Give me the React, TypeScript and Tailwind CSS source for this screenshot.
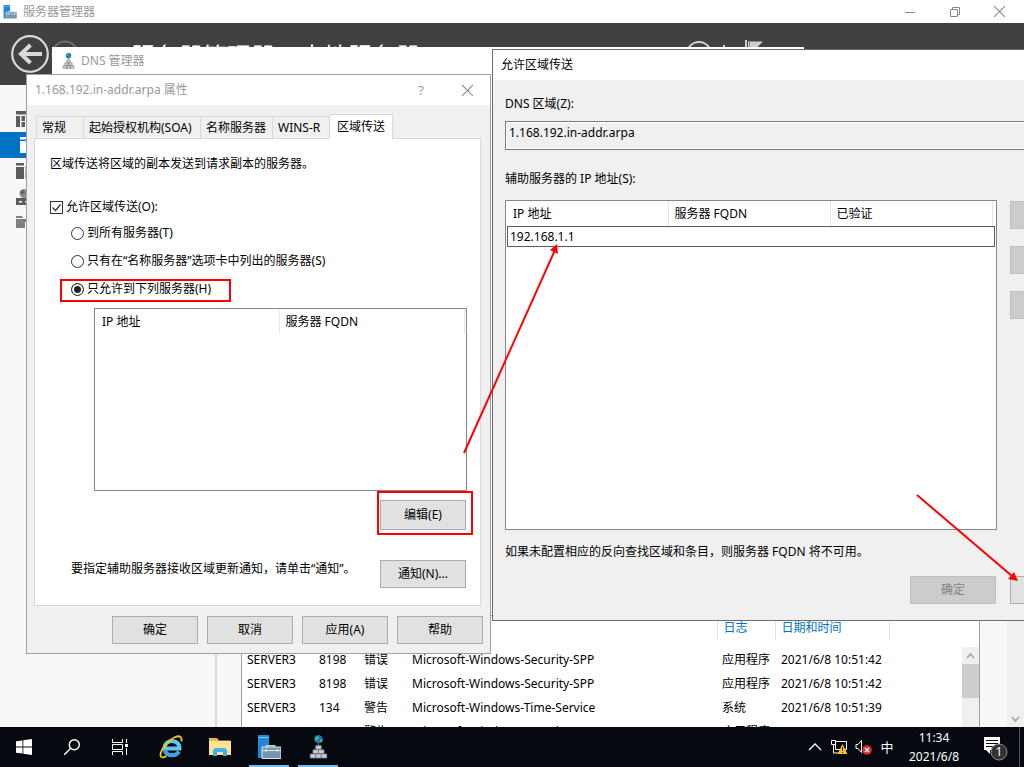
import React from 'react';

interface ServerEvent {
  server: string;
  id: string;
  level: string;
  source: string;
  log: string;
  time: string;
}

const events: ServerEvent[] = [
  { server: 'SERVER3', id: '8198', level: '错误', source: 'Microsoft-Windows-Security-SPP', log: '应用程序', time: '2021/6/8 10:51:42' },
  { server: 'SERVER3', id: '8198', level: '错误', source: 'Microsoft-Windows-Security-SPP', log: '应用程序', time: '2021/6/8 10:51:42' },
  { server: 'SERVER3', id: '134', level: '警告', source: 'Microsoft-Windows-Time-Service', log: '系统', time: '2021/6/8 10:51:39' },
  { server: '', id: '', level: '警告', source: 'Microsoft-Windows-Security-SPP', log: '应用程序', time: '' },
];

const tabs = [
  { label: '常规', width: 'w-[47px]' },
  { label: '起始授权机构(SOA)', width: 'w-[117px]' },
  { label: '名称服务器', width: 'w-[72px]' },
  { label: 'WINS-R', width: 'w-[57px]' },
];

const buttonClass = 'h-7 w-[86px] shrink-0 border border-[#adadad] bg-[#e1e1e1] text-center leading-[18px]';
const disabledClass = 'h-7 w-[86px] shrink-0 border border-[#bfbfbf] bg-[#cccccc] text-[#838383]';
const radioClass =
  'size-[13px] shrink-0 appearance-none rounded-full border border-[#333333] bg-white checked:bg-[#222222] checked:shadow-[inset_0_0_0_2px_#ffffff]';

function ServerIcon({ className }: { className: string }) {
  return (
    <svg viewBox="0 0 24 24" className={className}>
      <path d="M1 0h11v23H1z" fill="#1e88d6" />
      <path d="M1 2.5h11" stroke="#8cc8f3" />
      <path d="M9.5 12.5v-1.8h8v1.8" fill="none" stroke="#c7d6e0" strokeWidth="1.5" />
      <path d="M5 12h19v11.500H5z" fill="#7896ab" stroke="#dbe6ed" />
      <path d="M5 15.500h19M9 14v3M20 14v3" stroke="#dbe6ed" fill="none" />
    </svg>
  );
}

function DnsIcon({ className }: { className: string }) {
  return (
    <svg viewBox="0 0 20 26" className={className}>
      <circle cx="10" cy="4.500" r="4.500" fill="#1f6fc4" />
      <path d="M7 1.500c3-1 4 1 3 2.500S7 5 6 6.500M11 6l3-2 .3 2.500-2 2z" fill="#43c463" />
      <path d="M10 9v3" stroke="#888" />
      <g fill="#c9ccd4" stroke="#777b86" strokeWidth=".8">
        <path d="M7 11.500h6v4H7zM4 16h6v4H4zM10 16h6v4h-6zM1 20.500h6v4.500H1zM7 20.500h6v4.500H7zM13 20.500h6v4.500h-6z" />
      </g>
    </svg>
  );
}

function ServerManager() {
  return (
    <div className="flex min-h-0 flex-1 flex-col bg-white">
      <div className="flex h-[23px] shrink-0 items-center pr-[2px] pl-[3px] text-[#999999]">
        <ServerIcon className="mt-px size-[14px]" />
        <span className="ml-[6px] leading-[18px]">服务器管理器</span>
        <div className="ml-auto flex items-center">
          <button aria-label="最小化" className="flex h-[23px] w-[45px] items-center justify-center">
            <svg viewBox="0 0 10 10" className="size-[10px]" stroke="#888" fill="none"><path d="M0 5.500h10" /></svg>
          </button>
          <button aria-label="还原" className="flex h-[23px] w-[45px] items-center justify-center">
            <svg viewBox="0 0 10 10" className="size-[10px]" stroke="#888" fill="none"><path d="M.5 2.500h7v7h-7zM2.500 2.500v-2h7v7h-2" /></svg>
          </button>
          <button aria-label="关闭" className="flex h-[23px] w-[45px] items-center justify-center">
            <svg viewBox="0 0 10 10" className="size-[11px]" stroke="#888" fill="none"><path d="M0 0l10 10M10 0L0 10" /></svg>
          </button>
        </div>
      </div>

      <header className="flex h-[62px] shrink-0 items-center bg-[#414141] pl-[11px] text-white">
        <button aria-label="后退">
          <svg viewBox="0 0 38 38" className="size-[38px]" fill="none" stroke="#d9d9d9">
            <circle cx="19" cy="19" r="17.800" strokeWidth="2.200" />
            <path d="M31 19H10M19.500 10L10 19l9.500 9" strokeWidth="4" />
          </svg>
        </button>
        <svg viewBox="0 0 28 28" className="ml-[2px] size-[28px]" fill="none" stroke="#6e6e6e" strokeWidth="2"><circle cx="14" cy="14" r="12.500" /></svg>
        <h1 className="ml-[52px] flex-1 pt-1 text-[24px] leading-[32px] whitespace-nowrap">
          服务器管理器<span className="mx-[9px] inline-block w-[7px]">·</span>本地服务器
        </h1>
        <svg viewBox="0 0 90 28" className="mr-[32px] h-[28px] w-[90px] shrink-0" fill="none" stroke="#cfcfcf">
          <circle cx="15" cy="14" r="12" strokeWidth="2" />
          <path d="M39 5h2v2h-2z" fill="#cfcfcf" stroke="none" />
          <path d="M61 0h2v28h-2zM64 1h1v27h-1zM65.500 1.500H79l-5 5 5 6H65.500z" fill="#cfcfcf" stroke="none" />
        </svg>
        <nav className="flex gap-[12px] pt-[6px] pr-[24px] leading-[18px] text-[#bbbbbb]">
          <button>管理(M)</button>
          <button>工具(T)</button>
          <button>视图(V)</button>
          <button>帮助(H)</button>
        </nav>
      </header>

      <div className="flex min-h-0 flex-1 overflow-hidden">
        <aside className="flex w-[217px] shrink-0 flex-col border-r-2 border-[#d9d9d9] bg-[#f8f8f8] pt-[21px]">
          <div className="flex h-[26px] items-center pl-4">
            <svg viewBox="0 0 16 16" className="size-4" fill="#5c5c5c"><path d="M0 0h16v3.500H0zM0 5h4v11H0zM5.500 5H9v5H5.500zM5.500 11H9v5H5.500zM10.500 5H16v11h-5.500z" /></svg>
          </div>
          <div className="flex h-[26px] items-center bg-[#0072c6] pl-5">
            <svg viewBox="0 0 16 16" className="size-4" fill="#fff"><path d="M0 0h16v2.500H0zM0 4h16v12H0z" /></svg>
          </div>
          <div className="flex h-[26px] items-center pl-4">
            <svg viewBox="0 0 16 16" className="size-4" fill="#5c5c5c"><path d="M0 0h8v2.500H0zM0 4h8v12H0zM9.500 3H16v3H9.500zM9.500 7H16v9H9.500z" /></svg>
          </div>
          <div className="flex h-[26px] items-center pl-4">
            <svg viewBox="0 0 16 16" className="size-4" fill="#5c5c5c">
              <circle cx="8" cy="4.500" r="4.500" fill="#8a8a8a" />
              <path d="M4 3l3-2 2 3-3 1zM0 9h16v7H0z" />
              <path d="M3 12h3v1.500H3zM9 12h3v1.500H9z" fill="#fff" />
            </svg>
          </div>
          <div className="flex h-[26px] items-center pl-4">
            <svg viewBox="0 0 16 16" className="size-4" fill="#808080"><path d="M0 1h6l1 2H0zM0 4h16v3H9v6H0z" /><path d="M10 8h6v8h-6z" fill="#555" /></svg>
          </div>
        </aside>

        <main className="flex min-w-0 flex-1 bg-[#f8f8f8] pl-[24px]">
          <section className="min-w-0 flex-1 border-x border-[#a0a0a0] bg-white pt-[531px]">
            <table className="w-full table-fixed text-left whitespace-nowrap">
              <thead>
                <tr className="h-[24px] leading-[18px] text-[#0072c6]">
                  <th className="w-[475px] border-r border-[#e0e0e0]" />
                  <th className="w-[58px] border-r border-[#e0e0e0] pl-[6px] font-normal">日志</th>
                  <th className="w-[114px] border-r border-[#e0e0e0] pl-[6px] font-normal">日期和时间</th>
                  <th />
                </tr>
              </thead>
            </table>
            <div className="mt-[7px] flex">
              <table className="mt-px min-w-0 flex-1 table-fixed text-left whitespace-nowrap">
                <colgroup>
                  <col className="w-[72px]" />
                  <col className="w-[45px]" />
                  <col className="w-[48px]" />
                  <col className="w-[310px]" />
                  <col className="w-[58px]" />
                  <col />
                </colgroup>
                <tbody>
                  {events.map((event, i) => (
                    <tr key={i} className="h-[24px] leading-[18px]">
                      <td className="pl-[5px]">{event.server}</td>
                      <td className="pl-[5px]">{event.id}</td>
                      <td className="pl-[5px]">{event.level}</td>
                      <td className="pl-[5px]">{event.source}</td>
                      <td className="pl-[5px]">{event.log}</td>
                      <td className="pl-[6px]">{event.time}</td>
                    </tr>
                  ))}
                </tbody>
              </table>
              <div className="flex w-[17px] flex-col bg-[#f0f0f0]">
                <svg viewBox="0 0 17 17" className="size-[17px]" fill="none" stroke="#a3a3a3" strokeWidth="1.500"><path d="M5 11l3.500-4 3.500 4" /></svg>
                <div className="h-[34px] bg-[#cdcdcd]" />
              </div>
            </div>
          </section>
          <div className="w-[27px]" />
          <div className="flex w-[17px] flex-col justify-end bg-[#f0f0f0]">
            <svg viewBox="0 0 17 17" className="size-[17px]" fill="none" stroke="#a3a3a3" strokeWidth="1.500"><path d="M5 7l3.500 4L12 7" /></svg>
          </div>
        </main>
      </div>
    </div>
  );
}

function DnsManager() {
  return (
    <div className="absolute top-[47px] left-[52px] flex h-[569px] w-[752px] flex-col border-b border-[#a0a0a0] bg-white">
      <div className="flex h-[28px] items-center pl-[10px] text-[#999999]">
        <DnsIcon className="h-[16px] w-[13px]" />
        <span className="ml-[6px] leading-[18px]">DNS 管理器</span>
      </div>
    </div>
  );
}

function ZonePropertiesDialog() {
  return (
    <div role="dialog" aria-label="1.168.192.in-addr.arpa 属性" className="absolute top-[74px] left-[26px] flex w-[465px] flex-col border border-[#a0a0a0] bg-[#f0f0f0] pb-[9px]">
      <div className="flex h-[30px] items-center bg-white pl-2 text-[#999999]">
        <span className="leading-[18px]">1.168.192.in-addr.arpa 属性</span>
        <button aria-label="帮助" className="ml-auto w-[46px] text-[13px] leading-[18px]">?</button>
        <button aria-label="关闭" className="flex h-[30px] w-[46px] items-center justify-center">
          <svg viewBox="0 0 10 10" className="size-[11px]" stroke="#888" fill="none"><path d="M0 0l10 10M10 0L0 10" /></svg>
        </button>
      </div>

      <div role="tablist" className="flex items-end pt-[9px] pl-[9px] whitespace-nowrap">
        {tabs.map((tab) => (
          <button
            key={tab.label}
            role="tab"
            className={`h-[22px] border-t border-l border-[#d9d9d9] pt-px pl-[5px] text-left leading-[18px] ${tab.width}`}
          >
            {tab.label}
          </button>
        ))}
        <button role="tab" aria-selected="true" className="z-10 -mb-px h-[25px] w-[64px] border border-b-0 border-[#d9d9d9] bg-white text-center leading-[18px]">
          区域传送
        </button>
      </div>

      <div role="tabpanel" className="mr-[9px] ml-[7px] flex flex-col border border-[#d9d9d9] bg-white pr-[14px] pb-[17px] pl-[15px] leading-[18px]">
        <p className="mt-[16px]">区域传送将区域的副本发送到请求副本的服务器。</p>
        <label className="mt-[25px] flex items-center gap-[3px]">
          <span className="relative flex">
            <input type="checkbox" defaultChecked className="peer size-[13px] appearance-none border border-[#333333] bg-white" />
            <svg viewBox="0 0 13 13" className="pointer-events-none absolute inset-0 hidden size-[13px] peer-checked:block" fill="none" stroke="#333" strokeWidth="1.200"><path d="M2.500 6.500l3 3 5-6" /></svg>
          </span>
          允许区域传送(O):
        </label>

        <div className="flex flex-col gap-[10px] pt-2 pl-[21px]">
          <label className="flex items-center gap-[3px]">
            <input type="radio" name="transfer" className={radioClass} />
            到所有服务器(T)
          </label>
          <label className="flex items-center gap-[3px]">
            <input type="radio" name="transfer" className={radioClass} />
            只有在“名称服务器”选项卡中列出的服务器(S)
          </label>
          <label className="relative flex items-center gap-[3px]">
            <input type="radio" name="transfer" defaultChecked className={radioClass} />
            只允许到下列服务器(H)
            <span className="pointer-events-none absolute -top-px -left-[11px] h-[23px] w-[171px] border-2 border-[#ff0000]" />
          </label>
        </div>

        <div className="mt-[10px] ml-[44px] h-[183px] w-[373px] border border-[#828790] bg-white">
          <table className="w-full table-fixed text-left">
            <thead>
              <tr className="h-[25px]">
                <th className="w-[184px] border-r border-[#e5e5e5] pl-[7px] font-normal">IP 地址</th>
                <th className="border-r border-[#e5e5e5] pl-[6px] font-normal">服务器 FQDN</th>
                <th className="w-[2px]" />
              </tr>
            </thead>
          </table>
        </div>

        <div className="mt-[9px] flex justify-end">
          <div className="relative">
            <button className="block h-[30px] w-[86px] border border-[#adadad] bg-[#e1e1e1] text-center leading-[18px]">编辑(E)</button>
            <span className="pointer-events-none absolute -top-[9px] -left-[3px] h-[44px] w-[96px] border-2 border-[#ff0000]" />
          </div>
        </div>
        <div className="mt-[30px] flex items-start justify-between pl-[21px]">
          <span>要指定辅助服务器接收区域更新通知，请单击“通知”。</span>
          <button className={buttonClass}>通知(N)...</button>
        </div>
      </div>

      <div className="mt-[10px] mr-[7px] flex justify-end gap-[9px]">
        <button className={buttonClass}>确定</button>
        <button className={buttonClass}>取消</button>
        <button className={buttonClass}>应用(A)</button>
        <button className={buttonClass}>帮助</button>
      </div>
    </div>
  );
}

function ZoneTransferDialog() {
  return (
    <div role="dialog" aria-label="允许区域传送" className="absolute top-[49px] left-[492px] flex w-[618px] flex-col border border-[#6b6b6b] bg-[#f0f0f0] pb-4 leading-[18px]">
      <div className="flex h-[30px] items-center bg-white pl-2">允许区域传送</div>
      <div className="flex flex-col pr-[13px] pl-[12px]">
        <label htmlFor="zone" className="mt-[15px]">DNS 区域(Z):</label>
        <input
          id="zone"
          readOnly
          defaultValue="1.168.192.in-addr.arpa"
          className="mt-[8px] h-[29px] border border-[#7a7a7a] bg-[#f0f0f0] pb-[6px] pl-[3px] shadow-[inset_0_0_0_1px_#ffffff]"
        />
        <span className="mt-[20px]">辅助服务器的 IP 地址(S):</span>
        <div className="mt-[12px] flex justify-between">
          <div className="h-[330px] w-[492px] border border-[#828790] bg-white px-px">
            <table className="w-full table-fixed text-left">
              <thead>
                <tr className="h-[25px]">
                  <th className="w-[161px] border-r border-[#e5e5e5] pl-[6px] font-normal">IP 地址</th>
                  <th className="w-[162px] border-r border-[#e5e5e5] pl-[6px] font-normal">服务器 FQDN</th>
                  <th className="w-[162px] border-r border-[#e5e5e5] pl-[6px] font-normal">已验证</th>
                  <th />
                </tr>
              </thead>
            </table>
            <input aria-label="IP 地址" defaultValue="192.168.1.1" className="block h-[21px] w-full border border-[#5a5a5a] bg-white pl-[2px]" />
          </div>
          <div className="flex flex-col gap-[17px] pt-px">
            <button disabled aria-label="删除" className={disabledClass} />
            <button disabled aria-label="上移" className={disabledClass} />
            <button disabled aria-label="下移" className={disabledClass} />
          </div>
        </div>
        <p className="mt-[13px]">如果未配置相应的反向查找区域和条目，则服务器 FQDN 将不可用。</p>
        <div className="mt-[15px] flex justify-end gap-[14px]">
          <button disabled className={disabledClass}>确定</button>
          <button aria-label="取消" className={buttonClass} />
        </div>
      </div>
    </div>
  );
}

function Annotations() {
  return (
    <svg className="pointer-events-none absolute top-0 left-0 h-[767px] w-[1024px]" fill="none" stroke="#ff0000" strokeWidth="2">
      <path d="M464 453L555 250" />
      <path d="M557 244l1 10-8-4z" fill="#ff0000" stroke="none" />
      <path d="M917 495l95 81" />
      <path d="M1018 581l-10-2 6-7z" fill="#ff0000" stroke="none" />
    </svg>
  );
}

function Taskbar() {
  return (
    <footer className="flex h-10 shrink-0 items-center bg-[#060a10] text-white">
      <button aria-label="开始" className="flex h-10 w-12 items-center justify-center">
        <svg viewBox="0 0 16 16" className="size-4" fill="#fff"><path d="M0 2.300l6.500-.9v6.200H0zM7.300 1.300L16 0v7.600H7.300zM0 8.400h6.500v6.200L0 13.700zM7.300 8.400H16V16l-8.700-1.300z" /></svg>
      </button>
      <button aria-label="搜索" className="flex h-10 w-12 items-center justify-center">
        <svg viewBox="0 0 16 16" className="size-4" fill="none" stroke="#fff" strokeWidth="1.400"><circle cx="10.300" cy="5.700" r="5" /><path d="M6.700 9.300L0 16" /></svg>
      </button>
      <button aria-label="任务视图" className="flex h-10 w-12 items-center justify-center">
        <svg viewBox="0 0 16 16" className="size-4" fill="none" stroke="#fff"><path d="M.5 0v3.500h10V0M.5 5.500h10v5H.5zM.5 16v-3.500h10V16M14.500 0v4M14.500 9v7" /><path d="M13 5h3v3h-3z" fill="#fff" stroke="none" /></svg>
      </button>
      <div className="ml-[3px] flex gap-px">
        <button aria-label="Internet Explorer" className="flex h-10 w-12 items-center justify-center">
          <svg viewBox="0 0 24 24" className="size-6" fill="none">
            <path d="M6.500 13.500H20.500c.3-4-2.800-7.500-7.500-7.500s-7.500 3.500-7.500 7.300c0 4 3.200 7 7.500 7 3 0 5.500-1.300 6.700-3.800" stroke="#5ec8f2" strokeWidth="4" />
            <path d="M5.500 14.500c.4 3.500 3.500 5.800 7.500 5.800 3 0 5.500-1.300 6.700-3.800" stroke="#35a3e0" strokeWidth="3.500" />
            <path d="M22.300 6.500c1.200-4-1.300-6.500-6-4.500C9.500 5 1 15 1.500 20.500c.3 2.500 3 2.500 6 .5" stroke="#f5c518" strokeWidth="1.800" />
          </svg>
        </button>
        <button aria-label="文件资源管理器" className="flex h-10 w-12 items-center justify-center">
          <svg viewBox="0 0 22 18" className="h-[18px] w-[22px]">
            <path d="M0 0h8l2 2.500h11V5H0z" fill="#e8b64c" />
            <path d="M0 3h22v14H0z" fill="#ffe394" />
            <path d="M4 18v-6l2-2h10l2 2v6h-4v-4H8v4z" fill="#3fb1e8" />
          </svg>
        </button>
        <button aria-label="服务器管理器" className="flex h-10 w-12 flex-col items-center justify-between">
          <ServerIcon className="mt-2 size-6" />
          <span className="h-[2px] w-10 bg-[#76b9ed]" />
        </button>
        <button aria-label="DNS 管理器" className="flex h-10 w-12 flex-col items-center justify-between">
          <DnsIcon className="mt-2 h-[24px] w-[19px]" />
          <span className="h-[2px] w-10 bg-[#76b9ed]" />
        </button>
      </div>

      <div className="ml-auto flex h-10 items-center">
        <button aria-label="显示隐藏的图标" className="flex w-6 justify-center">
          <svg viewBox="0 0 14 8" className="h-2 w-[14px]" fill="none" stroke="#fff" strokeWidth="1.300"><path d="M1 7l6-6 6 6" /></svg>
        </button>
        <button aria-label="网络" className="flex w-6 justify-center">
          <svg viewBox="0 0 16 16" className="size-4" fill="none" stroke="#fff">
            <path d="M4.500 2.500h11v8h-11zM.5 1.500h4v4h-4zM2.500 5.500v8.500h6M9 10v4" />
            <path d="M11.500 5L16.500 15h-10z" fill="#ffc20e" stroke="none" />
            <path d="M11.500 8v4M11.500 13v1" stroke="#222" />
          </svg>
        </button>
        <button aria-label="音量" className="flex w-6 justify-center">
          <svg viewBox="0 0 17 16" className="h-4 w-[17px]" fill="none" stroke="#fff">
            <path d="M1 5.500h2l3.500-4v12l-3.500-4H1z" />
            <circle cx="12" cy="11" r="4.800" fill="#d92c33" stroke="none" />
            <path d="M10 9l4 4M14 9l-4 4" strokeWidth="1.300" />
          </svg>
        </button>
        <button className="w-6 text-center text-[13px] leading-[18px]">中</button>
        <div className="w-[70px] text-center leading-[19px]">
          <div>11:34</div>
          <div>2021/6/8</div>
        </div>
        <button aria-label="通知" className="mr-[9px] ml-[13px] flex">
          <svg viewBox="0 0 28 28" className="size-[28px]">
            <path d="M2 4h16v13H8v4l-4-4H2z" fill="#fff" />
            <path d="M4 7.500h12M4 10.500h12M4 13.500h8" stroke="#060a10" />
            <circle cx="17" cy="19" r="8" fill="#333333" stroke="#8a8a8a" />
            <text x="17" y="23" textAnchor="middle" fontSize="12" fill="#fff">1</text>
          </svg>
        </button>
        <div className="h-10 w-[5px] border-l border-[#555555]" />
      </div>
    </footer>
  );
}

export default function App() {
  return (
    <div className="relative flex h-screen flex-col overflow-hidden font-['Noto_Sans','Noto_Sans_CJK_SC',sans-serif] text-[12px] text-black">
      <ServerManager />
      <DnsManager />
      <ZonePropertiesDialog />
      <ZoneTransferDialog />
      <Annotations />
      <Taskbar />
    </div>
  );
}
